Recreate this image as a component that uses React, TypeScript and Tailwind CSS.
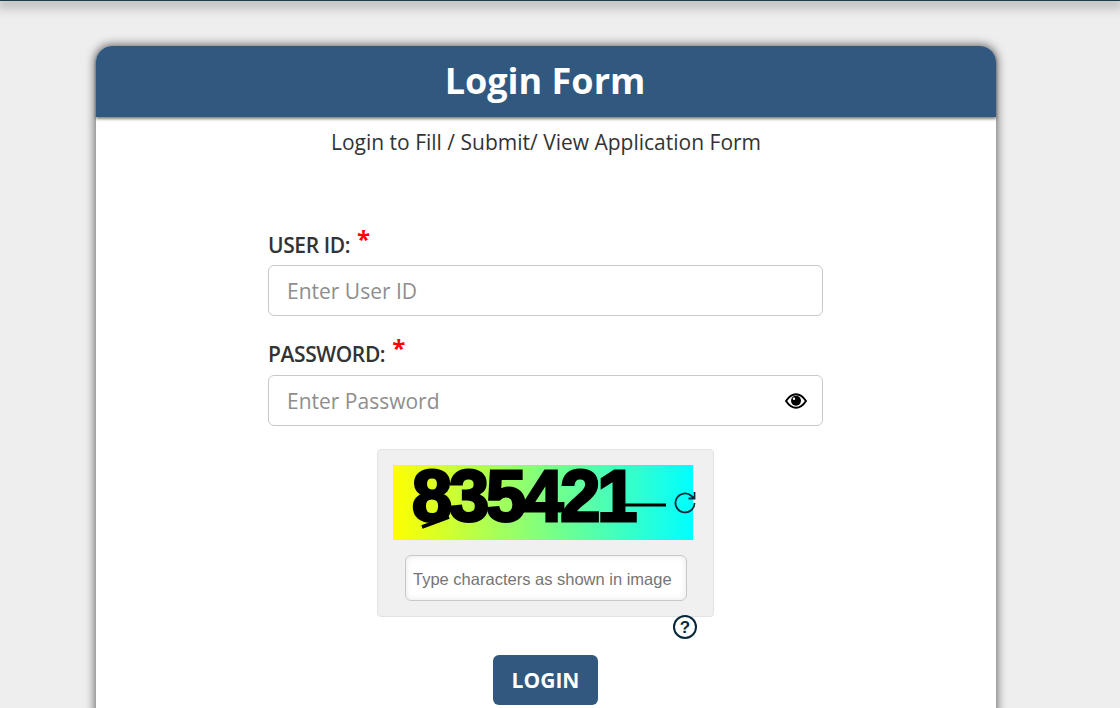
export default function App() {
  return (
    <div className="h-[708px] w-[1120px] overflow-hidden bg-[#eeeeee] font-['Open_Sans',sans-serif] text-[#333333]">
      <div className="h-px bg-[#1d3f4a] shadow-[0_2px_12px_4px_rgba(0,0,0,0.28)]" />
      <div className="mt-[45px] ml-[96px] h-[800px] w-[900px] rounded-t-[16px] bg-white shadow-[0_0_8px_2px_rgba(0,0,0,0.5)]">
        <div className="flex h-[71px] items-center justify-center rounded-t-[16px] bg-[#31587e] pr-[2px] pb-[2px] shadow-[0_2px_3px_rgba(0,0,0,0.5)]">
          <h1 className="text-[36px] leading-none font-bold text-white">Login Form</h1>
        </div>
        <p className="mt-[10px] text-center text-[21px] leading-[30px] text-[#333333]">Login to Fill / Submit/ View Application Form</p>
        <form className="mt-[74px] ml-[172px] flex w-[555px] flex-col">
          <label className="flex h-[32px] items-start text-[21px] leading-[28px] font-semibold tracking-[-0.4px] text-[#333333]">
            USER ID:
            <span className="relative -top-[10px] ml-[7px] text-[24px] leading-[36px] font-bold text-[#ff0000]">*</span>
          </label>
          <div className="mt-[2px] flex h-[51px] items-center rounded-[6px] border border-[#c9c9c9] bg-white px-[18px] pt-[2px] text-[21px] text-[#8e8e8e]">
            Enter User ID
          </div>
          <label className="mt-[23px] flex h-[36px] items-start pt-[1px] text-[21px] leading-[28px] font-semibold tracking-[-0.4px] text-[#333333]">
            PASSWORD:
            <span className="relative -top-[10px] ml-[7px] text-[24px] leading-[36px] font-bold text-[#ff0000]">*</span>
          </label>
          <div className="flex h-[51px] items-center justify-between rounded-[6px] border border-[#c9c9c9] bg-white pr-[15px] pl-[18px] text-[21px] text-[#8e8e8e]">
            <span className="pt-[2px]">Enter Password</span>
            <svg width="22" height="16" viewBox="0 0 22 16" aria-hidden="true">
              <path d="M1 8C4 3.500 7.500 1.200 11 1.200S18 3.500 21 8c-3 4.500-6.500 6.800-10 6.800S4 12.500 1 8Z" fill="white" stroke="black" strokeWidth="2" />
              <circle cx="11" cy="7.800" r="5" fill="black" />
              <circle cx="9" cy="5.800" r="1.200" fill="white" />
            </svg>
          </div>
          <div className="mt-[23px] ml-[109px] h-[168px] w-[337px] rounded-[4px] border border-[#e3e3e3] bg-[#f0f0f0] pt-[15px] pl-[15px]">
            <div className="relative h-[75px] w-[300px] bg-[linear-gradient(to_right,#ffff00,#00ffff)]">
              <span className="absolute top-[-9px] left-[19px] font-['Liberation_Sans',sans-serif] text-[72px] leading-[80px] font-bold tracking-[-3px] text-black [-webkit-text-stroke:3px_black]">835421</span>
              <svg className="absolute inset-0 overflow-visible" width="300" height="75" viewBox="0 0 300 75" aria-hidden="true">
                <path d="M230 40H273" stroke="black" strokeWidth="3" fill="none" />
                <path d="M29 62L56 52" stroke="black" strokeWidth="3.500" fill="none" />
                <path d="M301.500 38a9.500 9.500 0 1 1-3-7l3 2.500M301.500 27v6.500h-6" stroke="#06283a" strokeWidth="1.800" fill="none" />
              </svg>
            </div>
            <div className="mt-[15px] ml-[12px] flex h-[46px] w-[282px] items-center rounded-[6px] border border-[#c8c8c8] bg-white pt-[2px] pl-[7px] font-['Liberation_Sans',sans-serif] text-[16.5px] whitespace-nowrap text-[#757575] shadow-[inset_0_0_6px_rgba(0,0,0,0.1)]">
              Type characters as shown in image
            </div>
          </div>
          <div className="mt-[-3px] ml-[404px] h-[24px] w-[26px]">
            <svg width="26" height="26" viewBox="0 0 26 26" aria-hidden="true">
              <circle cx="13" cy="13" r="11" fill="white" stroke="#06283a" strokeWidth="2" />
              <text x="13" y="19" textAnchor="middle" fontSize="17" fontWeight="700" fontFamily="Liberation Sans, sans-serif" fill="#06283a">?</text>
            </svg>
          </div>
          <button type="button" className="mx-auto mt-[17px] h-[50px] w-[105px] rounded-[6px] bg-[#31587e] pt-[2px] text-[21px] font-bold text-white">LOGIN</button>
        </form>
      </div>
    </div>
  );
}
